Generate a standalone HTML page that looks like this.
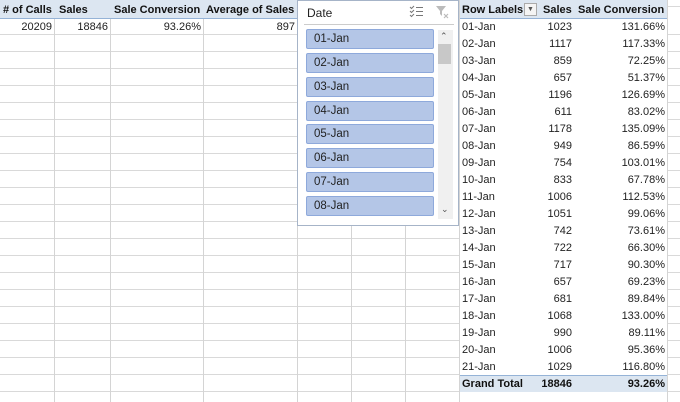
<!DOCTYPE html>
<html><head><style>
*{margin:0;padding:0;box-sizing:border-box}
body{width:680px;height:402px;overflow:hidden;background:#fff;font-family:"Liberation Sans",sans-serif;font-size:11px;color:#000;position:relative}
.grid{position:absolute;left:0;top:0;width:680px;height:402px;z-index:0;
background-image:repeating-linear-gradient(to bottom,transparent 0,transparent 16px,#d9d9d9 16px,#d9d9d9 17px);background-position:0 18px;background-repeat:repeat}
.v{position:absolute;top:0;height:402px;width:1px;background:#d4d4d4;z-index:1}
.hdr{position:absolute;top:0;height:19px;background:#dce6f1;border-bottom:1px solid #95b3d7;z-index:3}
.t{position:absolute;height:17px;line-height:18px;white-space:nowrap;z-index:5;color:#222}
.b{font-weight:bold;color:#111}
.r{text-align:right}
.slicer{position:absolute;left:297px;top:0;width:162px;height:226px;background:#fff;border:1px solid #a6b4c8;z-index:6}
.btn{position:absolute;left:8px;width:128px;height:20px;background:#b4c6e7;border:1px solid #8ea9db;border-radius:2px;line-height:19px;padding-left:7px;color:#222;font-size:11.5px}
</style></head><body>
<div class="grid"></div>
<div class="v" style="left:54px"></div>
<div class="v" style="left:110px"></div>
<div class="v" style="left:203px"></div>
<div class="v" style="left:297px"></div>
<div class="v" style="left:351px"></div>
<div class="v" style="left:405px"></div>
<div class="v" style="left:459px"></div>
<div class="v" style="left:667px"></div>

<div class="hdr" style="left:0;width:297px"></div>
<div class="t b" style="left:3px;top:1px">#&nbsp;of Calls</div>
<div class="t b" style="left:59px;top:1px">Sales</div>
<div class="t b" style="left:114px;top:1px">Sale Conversion</div>
<div class="t b" style="left:206px;top:1px">Average of Sales</div>
<div class="t r" style="left:0;width:52px;top:18px">20209</div>
<div class="t r" style="left:54px;width:54px;top:18px">18846</div>
<div class="t r" style="left:110px;width:91px;top:18px">93.26%</div>
<div class="t r" style="left:203px;width:92px;top:18px">897</div>

<!-- pivot -->
<div style="position:absolute;left:460px;top:19px;width:207px;height:356px;background:#fff;z-index:2"></div>
<div class="hdr" style="left:460px;width:207px"></div>
<div class="t b" style="left:462px;top:1px">Row Labels</div>
<div style="position:absolute;left:524px;top:3px;width:13px;height:13px;border:1px solid #aaa;background:#f4f4f4;font-size:7px;line-height:11px;text-align:center;color:#555;z-index:5">▼</div>
<div class="t b" style="left:543px;top:1px">Sales</div>
<div class="t b" style="left:578px;top:1px">Sale Conversion</div>

<div style="position:absolute;left:460px;top:375px;width:207px;height:17px;background:#dce6f1;border-top:1px solid #95b3d7;z-index:3"></div>
<div class="t b" style="left:462px;top:375px">Grand Total</div>
<div class="t b r" style="left:538px;width:34px;top:375px">18846</div>
<div class="t b r" style="left:574px;width:91px;top:375px">93.26%</div>

<div class="slicer">
<div style="position:absolute;left:9px;top:5px;font-size:12px;color:#222">Date</div>
<svg style="position:absolute;left:111px;top:4px" width="16" height="14" viewBox="0 0 16 14"><g stroke="#777" fill="none" stroke-width="1"><path d="M1 2l1.5 1.5L5 1M1 6l1.5 1.5L5 5M1 10l1.5 1.5L5 9M7 2.5h7M7 6.5h7M7 10.5h7"/></g></svg>
<svg style="position:absolute;left:137px;top:4px" width="15" height="15" viewBox="0 0 15 15"><path d="M1 1h10L7 6v5L5 9V6z" fill="#bbb"/><path d="M9 9l4 4M13 9l-4 4" stroke="#bbb" stroke-width="1.2"/></svg>
<div style="position:absolute;left:6px;top:23px;width:150px;height:1px;background:#ccc"></div>
<div class="btn" style="top:28px">01-Jan</div>
<div class="btn" style="top:52px">02-Jan</div>
<div class="btn" style="top:76px">03-Jan</div>
<div class="btn" style="top:100px">04-Jan</div>
<div class="btn" style="top:123px">05-Jan</div>
<div class="btn" style="top:147px">06-Jan</div>
<div class="btn" style="top:171px">07-Jan</div>
<div class="btn" style="top:195px">08-Jan</div>
<div style="position:absolute;left:140px;top:29px;width:15px;height:189px;background:#f0f0f0"></div>
<div style="position:absolute;left:140px;top:43px;width:13px;height:20px;background:#c8c8c8"></div>
<div style="position:absolute;left:142px;top:30px;font-size:9px;color:#555">⌃</div>
<div style="position:absolute;left:143px;top:203px;font-size:9px;color:#555">⌄</div>
</div>

<div class="t" style="left:462px;top:18px">01-Jan</div><div class="t r" style="left:538px;width:34px;top:18px">1023</div><div class="t r" style="left:574px;width:91px;top:18px">131.66%</div>
<div class="t" style="left:462px;top:35px">02-Jan</div><div class="t r" style="left:538px;width:34px;top:35px">1117</div><div class="t r" style="left:574px;width:91px;top:35px">117.33%</div>
<div class="t" style="left:462px;top:52px">03-Jan</div><div class="t r" style="left:538px;width:34px;top:52px">859</div><div class="t r" style="left:574px;width:91px;top:52px">72.25%</div>
<div class="t" style="left:462px;top:69px">04-Jan</div><div class="t r" style="left:538px;width:34px;top:69px">657</div><div class="t r" style="left:574px;width:91px;top:69px">51.37%</div>
<div class="t" style="left:462px;top:86px">05-Jan</div><div class="t r" style="left:538px;width:34px;top:86px">1196</div><div class="t r" style="left:574px;width:91px;top:86px">126.69%</div>
<div class="t" style="left:462px;top:103px">06-Jan</div><div class="t r" style="left:538px;width:34px;top:103px">611</div><div class="t r" style="left:574px;width:91px;top:103px">83.02%</div>
<div class="t" style="left:462px;top:120px">07-Jan</div><div class="t r" style="left:538px;width:34px;top:120px">1178</div><div class="t r" style="left:574px;width:91px;top:120px">135.09%</div>
<div class="t" style="left:462px;top:137px">08-Jan</div><div class="t r" style="left:538px;width:34px;top:137px">949</div><div class="t r" style="left:574px;width:91px;top:137px">86.59%</div>
<div class="t" style="left:462px;top:154px">09-Jan</div><div class="t r" style="left:538px;width:34px;top:154px">754</div><div class="t r" style="left:574px;width:91px;top:154px">103.01%</div>
<div class="t" style="left:462px;top:171px">10-Jan</div><div class="t r" style="left:538px;width:34px;top:171px">833</div><div class="t r" style="left:574px;width:91px;top:171px">67.78%</div>
<div class="t" style="left:462px;top:188px">11-Jan</div><div class="t r" style="left:538px;width:34px;top:188px">1006</div><div class="t r" style="left:574px;width:91px;top:188px">112.53%</div>
<div class="t" style="left:462px;top:205px">12-Jan</div><div class="t r" style="left:538px;width:34px;top:205px">1051</div><div class="t r" style="left:574px;width:91px;top:205px">99.06%</div>
<div class="t" style="left:462px;top:222px">13-Jan</div><div class="t r" style="left:538px;width:34px;top:222px">742</div><div class="t r" style="left:574px;width:91px;top:222px">73.61%</div>
<div class="t" style="left:462px;top:239px">14-Jan</div><div class="t r" style="left:538px;width:34px;top:239px">722</div><div class="t r" style="left:574px;width:91px;top:239px">66.30%</div>
<div class="t" style="left:462px;top:256px">15-Jan</div><div class="t r" style="left:538px;width:34px;top:256px">717</div><div class="t r" style="left:574px;width:91px;top:256px">90.30%</div>
<div class="t" style="left:462px;top:273px">16-Jan</div><div class="t r" style="left:538px;width:34px;top:273px">657</div><div class="t r" style="left:574px;width:91px;top:273px">69.23%</div>
<div class="t" style="left:462px;top:290px">17-Jan</div><div class="t r" style="left:538px;width:34px;top:290px">681</div><div class="t r" style="left:574px;width:91px;top:290px">89.84%</div>
<div class="t" style="left:462px;top:307px">18-Jan</div><div class="t r" style="left:538px;width:34px;top:307px">1068</div><div class="t r" style="left:574px;width:91px;top:307px">133.00%</div>
<div class="t" style="left:462px;top:324px">19-Jan</div><div class="t r" style="left:538px;width:34px;top:324px">990</div><div class="t r" style="left:574px;width:91px;top:324px">89.11%</div>
<div class="t" style="left:462px;top:341px">20-Jan</div><div class="t r" style="left:538px;width:34px;top:341px">1006</div><div class="t r" style="left:574px;width:91px;top:341px">95.36%</div>
<div class="t" style="left:462px;top:358px">21-Jan</div><div class="t r" style="left:538px;width:34px;top:358px">1029</div><div class="t r" style="left:574px;width:91px;top:358px">116.80%</div>
</body></html>
